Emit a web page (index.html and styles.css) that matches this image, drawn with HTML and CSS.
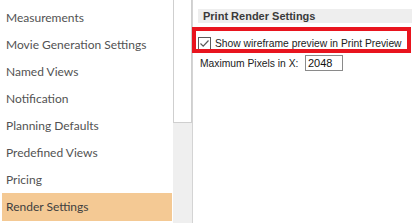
FILE: index.html
```html
<!DOCTYPE html>
<html>
<head>
<meta charset="utf-8">
<link rel="stylesheet" href="styles.css">
</head>
<body>
<div class="app">
  <ul class="list">
    <li class="item">Measurements</li>
    <li class="item">Movie Generation Settings</li>
    <li class="item">Named Views</li>
    <li class="item">Notification</li>
    <li class="item">Planning Defaults</li>
    <li class="item">Predefined Views</li>
    <li class="item">Pricing</li>
    <li class="item selected">Render Settings</li>
  </ul>
  <div class="scroll">
    <div class="thumb"></div>
  </div>
  <div class="panel">
    <div class="band">Print Render Settings</div>
    <div class="row check-row">
      <span class="checkbox">
        <svg width="11" height="11" viewBox="0 0 11 11"><path d="M1.5 5.5 L4.2 8.2 L9.5 2.5" fill="none" stroke="#5a5a5a" stroke-width="1.2"/></svg>
      </span>
      <span class="label">Show wireframe preview in Print Preview</span>
    </div>
    <div class="row px-row">
      <span class="label plain">Maximum Pixels in X:</span>
      <span class="input">2048</span>
    </div>
    <div class="highlight"></div>
  </div>
</div>
</body>
</html>
```
FILE: styles.css
```css
html, body {
  margin: 0;
  padding: 0;
  background: #ffffff;
}
.app {
  display: flex;
  width: 412px;
  height: 223px;
  overflow: hidden;
}
.list {
  list-style: none;
  margin: 0;
  padding: 4px 0 0 0;
  width: 173px;
  flex: none;
}
.item {
  font-family: Lato, "Noto Sans", sans-serif;
  font-size: 12px;
  color: #525252;
  height: 27px;
  line-height: 27px;
  margin: 0 1px 0 2px;
  padding-left: 4px;
  white-space: nowrap;
}
.item.selected {
  background: #f4c994;
  height: 28px;
  line-height: 28px;
  color: #404040;
}
.scroll {
  width: 19px;
  flex: none;
  background: #efefef;
  border-right: 1px solid #d4d4d4;
  display: flex;
  flex-direction: column;
}
.thumb {
  height: 122px;
  width: 17px;
  background: #ffffff;
  border: 1px solid #cfcfcf;
  border-top: none;
}
.panel {
  flex: 1;
  position: relative;
  padding: 9px 0 0 5px;
  font-family: "Liberation Sans", Arial, sans-serif;
}
.band {
  height: 14px;
  line-height: 14px;
  background: #eeeeee;
  padding-left: 5px;
  font-weight: bold;
  font-size: 11px;
  color: #3a3a3a;
}
.row {
  display: flex;
  align-items: center;
  height: 16px;
}
.check-row {
  margin-top: 12px;
}
.checkbox {
  width: 11px;
  height: 11px;
  border: 1px solid #5c5c5c;
  background: #ffffff;
  display: flex;
  flex: none;
}
.label {
  font-size: 10.3px;
  color: #222222;
  margin-left: 4px;
  white-space: nowrap;
}
.label.plain {
  margin-left: 2px;
  width: 105px;
}
.px-row {
  margin-top: 4px;
}
.input {
  width: 34px;
  height: 14px;
  line-height: 14px;
  border: 1px solid #8a8a8a;
  padding-left: 2px;
  font-size: 11px;
  color: #111111;
}
.highlight {
  position: absolute;
  left: -1px;
  top: 27px;
  width: 211px;
  height: 18px;
  border: 4px solid #e8141e;
}
```
